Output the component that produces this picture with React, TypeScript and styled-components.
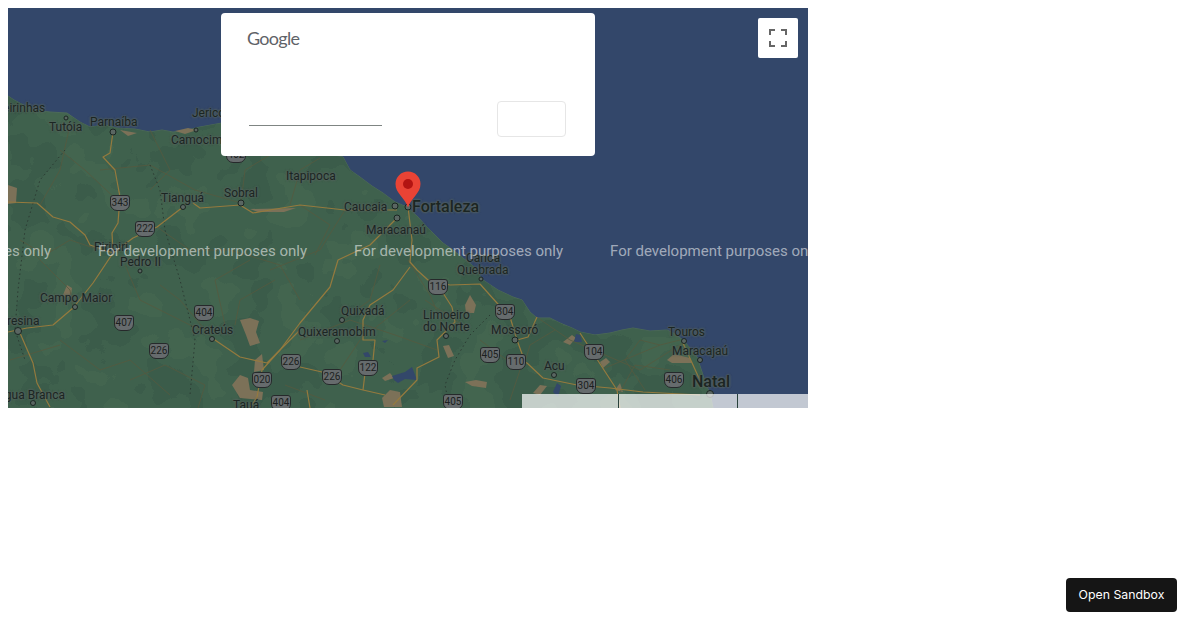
import React from "react";
import styled, { createGlobalStyle } from "styled-components";

const coast =
  "8,96 14,100 33,110 50,112 67,113 80,122 90,127 105,125 117,128 135,129 150,132 162,130 173,132 188,130 200,127 222,123 260,140 300,150 343,157 350,170 360,177 372,186 383,193 395,202 407,207 418,217 425,225 433,233 443,243 453,250 463,258 473,266 483,280 498,290 513,297 522,300 530,312 537,318 550,318 560,323 572,328 580,332 595,335 610,333 622,330 633,328 650,331 667,330 675,334 683,340 690,348 697,357 702,372 706,385 710,393 713,408 8,408";

const tans = [
  "8,185 17,188 16,203 8,204",
  "63,295 67,285 72,288 71,296 66,298",
  "120,130 137,133 128,136",
  "175,131 188,128 197,130 185,134",
  "240,320 250,318 259,321 256,332 260,343 250,346 246,335",
  "255,360 262,354 264,370 254,372",
  "232,385 240,375 248,378 250,390 263,392 262,400 240,398",
  "382,378 390,373 394,378 385,381",
  "382,398 390,390 400,392 402,407 384,407",
  "465,305 470,295 476,305 474,313 466,313",
  "443,346 449,345 454,356 448,358",
  "465,382 476,380 487,382 486,388 472,386",
  "563,342 572,335 576,338 570,345",
  "600,362 606,358 610,362 603,368",
  "667,360 674,354 690,358 692,363 672,363",
  "533,393 540,385 547,386 540,395",
  "615,390 620,383 623,392",
  "250,209 296,208 284,212 258,212",
];

const lakes = [
  "392,376 405,372 412,367 417,380 405,379 398,383 394,380",
  "363,353 368,352 371,357 365,357",
  "553,392 557,383 561,386 558,397",
  "576,334 580,335 582,342 574,342",
  "382,341 388,340 385,343",
];

const mainRoads = [
  "113,132 110,153 103,157 115,170 120,197 118,223 112,233 113,253 93,283 73,308 53,325 27,328 8,332",
  "8,202 37,203 53,217 70,222 85,235 90,245 113,253",
  "183,207 157,227 133,238 113,253",
  "193,203 200,208 240,205 253,213 270,210 300,205 345,210 397,210",
  "408,207 412,240 410,262 417,270 428,280 450,285 480,284 497,303 510,317 517,340 525,362",
  "443,293 452,307 455,322 437,340 439,357 417,368 417,380 393,405",
  "397,218 370,245 338,260 330,287 300,323 280,350 262,370 257,397 250,408",
  "410,267 393,290 370,305 363,320 363,340 375,340 373,360 365,373 363,390",
  "212,338 240,357 267,363 283,347 300,330",
  "300,367 322,372 343,385 363,390 385,395",
  "307,390 310,408",
  "20,333 33,363 37,383 50,407",
  "510,357 527,363 543,378 577,385 610,388 643,392 700,395",
  "580,333 617,390 620,408",
  "683,343 703,387",
  "537,317 528,337 517,340",
];

const minorRoads = [
  "70,125 60,170 40,205",
  "100,170 150,165 195,190 241,203",
  "241,203 245,170 270,155",
  "290,205 300,170 320,158",
  "157,227 190,250 230,250 280,265 300,300",
  "30,250 70,290 73,308",
  "125,265 140,300 200,330",
  "60,340 100,370 130,360 170,395",
  "212,338 180,300 160,285",
  "345,210 320,250 270,270",
  "300,340 350,320 395,335 437,350",
  "408,260 430,295 445,330",
  "538,318 570,340 640,370 683,343",
  "600,370 660,345 680,340",
  "620,392 635,365 670,370",
  "480,340 520,370 510,400",
  "120,203 85,170 60,150",
  "340,370 360,340 410,300",
  "250,260 215,280 225,325",
  "20,240 45,255 70,240 100,250",
  "150,130 170,170 150,190",
  "60,345 10,360",
  "130,380 165,365 205,385 198,408",
  "275,280 240,300 235,325",
  "300,205 330,225 315,255",
  "380,265 370,300 343,320",
  "470,330 440,310 425,300",
  "660,345 640,340 625,360 645,390",
  "555,330 530,345 525,362",
  "285,385 325,400",
];

const borders = [
  "65,150 40,180 25,230 18,290 15,330 25,360",
  "150,165 160,190 165,230 180,280 195,340 190,395",
  "490,315 470,335 455,360 445,385 448,400",
];

const towns: [number, number, number][] = [
  [113, 132, 3], [66, 118, 2], [196, 130, 2], [183, 207, 2.5], [241, 203, 3], [397, 218, 3],
  [395, 206, 3], [408, 207, 3], [75, 307, 2.5], [18, 331, 3.5], [140, 271, 2], [212, 339, 2.5],
  [342, 320, 2.5], [337, 341, 2.5], [446, 336, 2.5], [515, 340, 3], [554, 375, 2.5], [684, 341, 2.5],
  [700, 360, 2.5], [710, 394, 3.5], [33, 403, 2.5], [481, 279, 2],
];

const labels: { name: string; x: number; y: number; big?: boolean }[] = [
  { name: "Barreirinhas", x: -19, y: 108 },
  { name: "Tutóia", x: 49, y: 127 },
  { name: "Parnaíba", x: 90, y: 122 },
  { name: "Jericoacoara", x: 192, y: 113 },
  { name: "Camocim", x: 171, y: 140 },
  { name: "Tianguá", x: 161, y: 198 },
  { name: "Sobral", x: 224, y: 193 },
  { name: "Itapipoca", x: 286, y: 176 },
  { name: "Caucaia", x: 344, y: 207 },
  { name: "Fortaleza", x: 412, y: 207, big: true },
  { name: "Maracanaú", x: 366, y: 230 },
  { name: "Canoa", x: 466, y: 258 },
  { name: "Quebrada", x: 457, y: 270 },
  { name: "Piripiri", x: 94, y: 247 },
  { name: "Pedro II", x: 120, y: 262 },
  { name: "Campo Maior", x: 40, y: 298 },
  { name: "Teresina", x: -6, y: 321 },
  { name: "Água Branca", x: -3, y: 395 },
  { name: "Crateús", x: 192, y: 330 },
  { name: "Tauá", x: 233, y: 405 },
  { name: "Quixadá", x: 341, y: 311 },
  { name: "Quixeramobim", x: 298, y: 332 },
  { name: "Limoeiro", x: 423, y: 315 },
  { name: "do Norte", x: 423, y: 327 },
  { name: "Mossoró", x: 491, y: 330 },
  { name: "Acu", x: 544, y: 366 },
  { name: "Touros", x: 668, y: 332 },
  { name: "Maracajaú", x: 672, y: 351 },
  { name: "Natal", x: 692, y: 382, big: true },
];

const shields: [string, number, number][] = [
  ["402", 236, 155], ["343", 120, 203], ["222", 145, 229], ["404", 204, 313], ["407", 124, 323],
  ["226", 159, 351], ["226", 291, 362], ["020", 262, 380], ["404", 281, 403], ["226", 332, 377],
  ["122", 368, 368], ["116", 438, 287], ["304", 505, 312], ["405", 490, 355], ["110", 516, 362],
  ["405", 453, 402], ["104", 594, 352], ["304", 586, 386], ["406", 674, 380], ["226", 356, 416],
];

const GlobalStyle = createGlobalStyle`
  body {
    margin: 8px;
    background: #fff;
    font-family: "Roboto", "Liberation Sans", sans-serif;
  }
`;

const MapFrame = styled.div`
  position: relative;
  width: 800px;
  height: 400px;
  overflow: hidden;
  background: #33476a;
`;

const Terrain = styled.svg`
  display: block;
  width: 800px;
  height: 400px;
`;

const PlaceLabel = styled.span<{ $x: number; $y: number; $big?: boolean }>`
  position: absolute;
  left: ${(p) => p.$x - 8}px;
  top: ${(p) => p.$y - 8}px;
  transform: translateY(-50%);
  font-size: ${(p) => (p.$big ? 16 : 12)}px;
  font-weight: ${(p) => (p.$big ? 500 : 400)};
  line-height: 1;
  white-space: nowrap;
  color: #1b2522;
  text-shadow: 0 0 2px #56635f, 0 0 2px #56635f, 0 0 3px #56635f;
`;

const Shield = styled.span<{ $x: number; $y: number }>`
  position: absolute;
  left: ${(p) => p.$x - 18}px;
  top: ${(p) => p.$y - 16}px;
  width: 20px;
  height: 16px;
  box-sizing: border-box;
  border: 1px solid #26292b;
  border-radius: 3px 3px 7px 7px;
  background: #666b6d;
  color: #1c1f20;
  font-size: 10px;
  line-height: 14px;
  text-align: center;
`;

const Watermarks = styled.div`
  position: absolute;
  left: -166px;
  top: 234px;
  display: flex;
  gap: 47px;
  white-space: nowrap;
  pointer-events: none;
`;

const Watermark = styled.span`
  font-size: 15px;
  line-height: 18px;
  width: 209px;
  color: rgba(255, 255, 255, 0.55);
`;

const Pin = styled.svg`
  position: absolute;
  left: 387px;
  top: 163px;
  width: 26px;
  height: 37px;
`;

const AttributionBar = styled.div`
  position: absolute;
  right: 0;
  bottom: 0;
  width: 286px;
  height: 14px;
  display: grid;
  grid-template-columns: 96px 119px 71px;
`;

const AttributionCell = styled.div`
  background: rgba(255, 255, 255, 0.7);
  & + & {
    border-left: 1px solid #27403a;
  }
`;

const FullscreenButton = styled.button`
  position: absolute;
  top: 10px;
  right: 10px;
  width: 40px;
  height: 40px;
  padding: 0;
  border: 0;
  border-radius: 2px;
  background: #fff;
  display: flex;
  align-items: center;
  justify-content: center;
`;

const SearchCard = styled.div`
  position: absolute;
  left: 213px;
  top: 5px;
  width: 374px;
  height: 143px;
  box-sizing: border-box;
  padding: 13px 29px 19px 26px;
  background: #fff;
  border-radius: 4px;
  display: flex;
  flex-direction: column;
  justify-content: space-between;
`;

const GoogleMark = styled.div`
  font-family: "Lato", sans-serif;
  font-size: 18px;
  line-height: 24px;
  letter-spacing: -0.7px;
  color: #5f6368;
`;

const SearchRow = styled.div`
  display: flex;
  align-items: flex-start;
  justify-content: space-between;
`;

const SearchInput = styled.div`
  width: 133px;
  height: 24px;
  margin-left: 2px;
  border-bottom: 1px solid #7f8583;
`;

const SearchButton = styled.div`
  width: 69px;
  height: 36px;
  box-sizing: border-box;
  border: 1px solid #e6e6e6;
  border-radius: 4px;
`;

const OpenSandbox = styled.a`
  position: fixed;
  right: 23px;
  bottom: 18px;
  width: 111px;
  height: 34px;
  border-radius: 4px;
  background: #151515;
  color: #fff;
  font-family: "Inter", "Liberation Sans", sans-serif;
  font-size: 12.3px;
  line-height: 34px;
  text-align: center;
`;

export default function App() {
  return (
    <>
      <GlobalStyle />
      <MapFrame>
        <Terrain viewBox="8 8 800 400">
          <defs>
            <clipPath id="land">
              <polygon points={coast} />
            </clipPath>
            <filter id="forest" x="0" y="0" width="100%" height="100%" colorInterpolationFilters="sRGB">
              <feTurbulence type="fractalNoise" baseFrequency="0.022" numOctaves="3" seed="7" />
              <feColorMatrix values="0 0 0 0 0.23  0 0 0 0 0.36  0 0 0 0 0.29  1.4 0 0 0 -0.1" />
              <feComponentTransfer>
                <feFuncA type="discrete" tableValues="0 0 0 0.5 0.5 1 1" />
              </feComponentTransfer>
            </filter>
          </defs>
          <polygon points={coast} fill="#43654f" stroke="#4c6a58" strokeWidth="1" />
          <g clipPath="url(#land)">
            <rect x="8" y="90" width="710" height="320" filter="url(#forest)" />
          </g>
          {tans.map((p) => (
            <polygon key={p} points={p} fill="#7c7158" />
          ))}
          {lakes.map((p) => (
            <polygon key={p} points={p} fill="#33476a" />
          ))}
          {minorRoads.map((p) => (
            <polyline key={p} points={p} fill="none" stroke="#55593f" strokeWidth="0.8" />
          ))}
          {borders.map((p) => (
            <polyline key={p} points={p} fill="none" stroke="#2b3a32" strokeWidth="1" strokeDasharray="1.5 3" />
          ))}
          {mainRoads.map((p) => (
            <polyline key={p} points={p} fill="none" stroke="#957a3e" strokeWidth="1.2" strokeLinejoin="round" />
          ))}
          {towns.map(([x, y, r]) => (
            <circle key={`${x}-${y}`} cx={x} cy={y} r={r} fill="#5a6662" stroke="#1b2522" strokeWidth="1" />
          ))}
        </Terrain>

        {labels.map((l) => (
          <PlaceLabel key={l.name} $x={l.x} $y={l.y} $big={l.big}>
            {l.name}
          </PlaceLabel>
        ))}
        {shields.map(([n, x, y]) => (
          <Shield key={`${n}-${x}`} $x={x} $y={y}>
            {n}
          </Shield>
        ))}

        <Watermarks>
          {[0, 1, 2, 3].map((i) => (
            <Watermark key={i}>For development purposes only</Watermark>
          ))}
        </Watermarks>

        <Pin viewBox="0 0 26 37">
          <path
            d="M13 0.5C6 0.5 0.5 6 0.5 13c0 4.6 2.2 8 5 11.4 2.9 3.5 5.9 7 7.5 12.1 1.6-5.1 4.6-8.6 7.5-12.1 2.8-3.4 5-6.8 5-11.4C25.500 6 20 0.500 13 0.500z"
            fill="#ea4335"
          />
          <circle cx="13" cy="13" r="5" fill="#b31412" />
        </Pin>

        <AttributionBar>
          <AttributionCell />
          <AttributionCell />
          <AttributionCell />
        </AttributionBar>

        <FullscreenButton aria-label="Toggle fullscreen view">
          <svg width="18" height="18" viewBox="0 0 18 18">
            <path d="M0 6V0h6v2H2v4zM12 0h6v6h-2V2h-4zM0 12h2v4h4v2H0zM16 12h2v6h-6v-2h4z" fill="#666" />
          </svg>
        </FullscreenButton>

        <SearchCard>
          <GoogleMark>Google</GoogleMark>
          <SearchRow>
            <SearchInput />
            <SearchButton />
          </SearchRow>
        </SearchCard>
      </MapFrame>
      <OpenSandbox>Open Sandbox</OpenSandbox>
    </>
  );
}
